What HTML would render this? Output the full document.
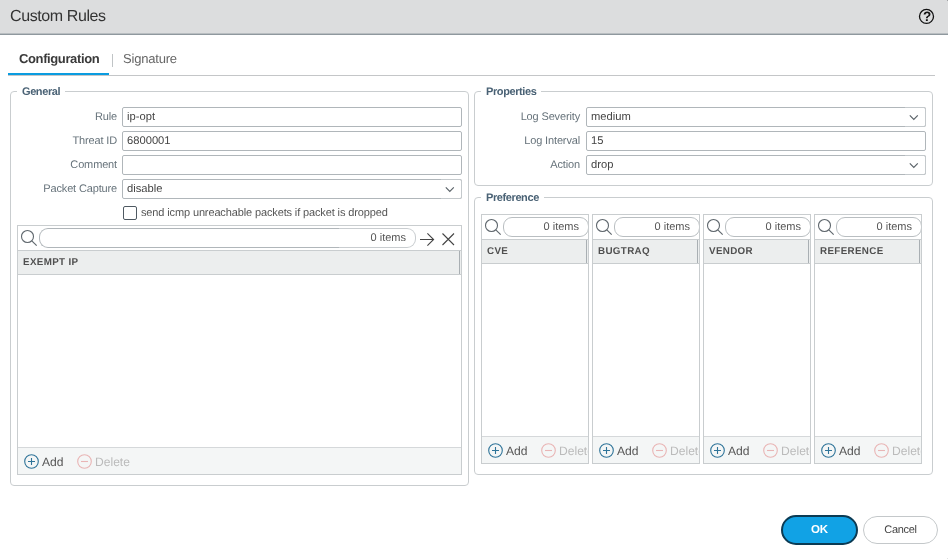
<!DOCTYPE html>
<html><head><meta charset="utf-8"><title>Custom Rules</title>
<style>
*{box-sizing:border-box;margin:0;padding:0}
html,body{width:948px;height:559px;overflow:hidden;background:#fff}
body{font-family:"Liberation Sans",sans-serif;font-size:11px;color:#555;position:relative;text-rendering:geometricPrecision}
#wrap{position:absolute;left:0;top:0;width:948px;height:559px;overflow:hidden;opacity:.999;will-change:opacity}
.abs{position:absolute}
#hdr{left:0;top:0;width:948px;height:35px;background:rgba(220,221,222,.99);border-bottom:1px solid #8f989e}
#hdr2{left:0;top:33px;width:948px;height:1px;background:#b9bec1}
#title{left:10px;top:7px;font-size:16px;color:#333;line-height:20px;white-space:nowrap;letter-spacing:-.4px}
.tab{top:51px;line-height:16px;font-size:13px;white-space:nowrap}
#tabline{left:8px;top:75px;width:927px;height:1px;background:#c4c6c8}
#tabact{left:8px;top:73px;width:101px;height:2px;background:#0a9ce0}
.fs{border:1px solid #c9cdcf;border-radius:4px}
.lg{background:rgba(255,255,255,.99);color:#4a6275;font-weight:bold;font-size:11px;line-height:14px;padding:0 5px;white-space:nowrap;letter-spacing:-.4px}
.lbl{text-align:right;line-height:20px;color:#67737b;white-space:nowrap;letter-spacing:-.15px}
.inp{height:20px;border:1px solid #b0b6ba;border-radius:2px;line-height:18px;padding-left:4px;color:#444;white-space:nowrap;font-size:11.2px}
.trg{width:21px;height:20px;border:1px solid #c4c9cc;border-left:none;border-radius:0 2px 2px 0}
.grid{border:1px solid #c9cdcf}
.gh{background:rgba(236,238,238,.99);border-top:1px solid #c9cdcf;border-bottom:1px solid #c9cdcf;font-weight:bold;font-size:9.8px;letter-spacing:.35px;color:#505050;white-space:nowrap}
.gt{background:rgba(244,246,246,.99);border-top:1px solid #d5d8da}
.pill{border:1px solid #b9bec1;border-radius:9px;height:20px;text-align:right;padding-right:9px;line-height:18px;color:#555;white-space:nowrap}
.btxt{font-size:12.1px;line-height:16px;white-space:nowrap}
svg{position:absolute;overflow:visible}
</style></head><body><div id="wrap">
<div id="hdr" class="abs"></div>
<div id="hdr2" class="abs"></div>
<div class="abs" style="left:947px;top:0;width:1px;height:1px;background:#a2a4a6"></div><div class="abs" style="left:947px;top:558px;width:1px;height:1px;background:#e2e2e2"></div>
<div id="title" class="abs">Custom Rules</div>
<svg style="left:918px;top:8px" width="16" height="16" viewBox="0 0 16 16"><circle cx="8.5" cy="8.4" r="7" fill="none" stroke="#111" stroke-width="1.3"/><text x="9" y="13.2" text-anchor="middle" font-family="Liberation Sans,sans-serif" font-weight="bold" font-size="13.5" fill="#111">?</text></svg>

<div class="abs tab" style="left:19px;font-weight:bold;color:#3a3a3a;letter-spacing:-.38px">Configuration</div>
<div class="abs" style="left:112px;top:54px;width:1px;height:13px;background:#c0c4c6"></div>
<div class="abs tab" style="left:123px;color:#666;letter-spacing:-.2px">Signature</div>
<div id="tabline" class="abs"></div>
<div id="tabact" class="abs"></div>

<!-- General -->
<div class="abs fs" style="left:10px;top:91px;width:459px;height:395px"></div>
<div class="abs lg" style="left:17px;top:85px">General</div>
<div class="abs lbl" style="left:20px;width:97px;top:107px">Rule</div>
<div class="abs inp" style="left:122px;top:107px;width:340px">ip-opt</div>
<div class="abs lbl" style="left:20px;width:97px;top:131px">Threat ID</div>
<div class="abs inp" style="left:122px;top:131px;width:340px">6800001</div>
<div class="abs lbl" style="left:20px;width:97px;top:155px">Comment</div>
<div class="abs inp" style="left:122px;top:155px;width:340px"></div>
<div class="abs lbl" style="left:20px;width:97px;top:179px">Packet Capture</div>
<div class="abs inp" style="left:122px;top:179px;width:340px">disable</div>
<div class="abs trg" style="left:441px;top:179px"></div><svg style="left:445px;top:186px" width="10" height="7" viewBox="0 0 10 7"><path d="M0.8 1.3 L4.8 5.5 L8.8 1.3" fill="none" stroke="#5a6268" stroke-width="1.15"/></svg>
<div class="abs" style="left:123px;top:206px;width:14px;height:14px;border:1px solid #4f5962;border-radius:2px"></div>
<div class="abs" style="left:141px;top:206px;line-height:14px;white-space:nowrap;letter-spacing:-.13px">send icmp unreachable packets if packet is dropped</div>

<div class="abs grid" style="left:17px;top:225px;width:445px;height:250px"></div>
<svg style="left:21px;top:230px" width="17" height="17" viewBox="0 0 17 17"><circle cx="6.5" cy="6.5" r="6" fill="none" stroke="#5f676d" stroke-width="1.1"/><path d="M10.8 10.8 L15.7 15.7" stroke="#5f676d" stroke-width="1.1" fill="none"/></svg>
<div class="abs pill" style="left:39px;top:228px;width:300px;border-color:#b0b6ba;border-right:none;border-radius:9px 0 0 9px"></div><div class="abs pill" style="left:339px;top:228px;width:77px;border-color:#c9cdd0;border-left:none;border-radius:0 9px 9px 0">0 items</div>
<svg style="left:419px;top:233px" width="16" height="14" viewBox="0 0 16 14"><path d="M1 6.5 H14.6 M8.4 0.3 L14.6 6.5 L8.4 12.7" fill="none" stroke="#444" stroke-width="1.1"/></svg>
<svg style="left:442px;top:233px" width="13" height="13" viewBox="0 0 13 13"><path d="M0.5 0.5 L12 12 M12 0.5 L0.5 12" fill="none" stroke="#444" stroke-width="1.1"/></svg>
<div class="abs gh" style="left:18px;top:250px;width:443px;height:25px;line-height:23px;padding-left:5px">EXEMPT IP</div>
<div class="abs" style="left:459px;top:251px;width:1px;height:23px;background:#a9afb3"></div>
<div class="abs gt" style="left:18px;top:447px;width:443px;height:27px"></div>
<svg style="left:24px;top:454px" width="15" height="15" viewBox="0 0 15 15"><circle cx="7.5" cy="7.5" r="6.8" fill="none" stroke="#2f7499" stroke-width="1.1"/><path d="M4 7.5 H11 M7.5 4 V11" stroke="#2f7499" stroke-width="1.1"/></svg>
<div class="abs btxt" style="left:42px;top:454px;color:#555">Add</div>
<svg style="left:77px;top:454px" width="15" height="15" viewBox="0 0 15 15"><circle cx="7.5" cy="7.5" r="6.8" fill="none" stroke="#e9b5b5" stroke-width="1.1"/><path d="M4 7.5 H11" stroke="#e9b5b5" stroke-width="1.1"/></svg>
<div class="abs btxt" style="left:95px;top:454px;color:#bbb">Delete</div>

<!-- Properties -->
<div class="abs fs" style="left:474px;top:91px;width:459px;height:95px"></div>
<div class="abs lg" style="left:481px;top:85px">Properties</div>
<div class="abs lbl" style="left:483px;width:97px;top:107px">Log Severity</div>
<div class="abs inp" style="left:586px;top:107px;width:340px">medium</div>
<div class="abs trg" style="left:905px;top:107px"></div><svg style="left:909px;top:114px" width="10" height="7" viewBox="0 0 10 7"><path d="M0.8 1.3 L4.8 5.5 L8.8 1.3" fill="none" stroke="#5a6268" stroke-width="1.15"/></svg>
<div class="abs lbl" style="left:483px;width:97px;top:131px">Log Interval</div>
<div class="abs inp" style="left:586px;top:131px;width:340px">15</div>
<div class="abs lbl" style="left:483px;width:97px;top:155px">Action</div>
<div class="abs inp" style="left:586px;top:155px;width:340px">drop</div>
<div class="abs trg" style="left:905px;top:155px"></div><svg style="left:909px;top:162px" width="10" height="7" viewBox="0 0 10 7"><path d="M0.8 1.3 L4.8 5.5 L8.8 1.3" fill="none" stroke="#5a6268" stroke-width="1.15"/></svg>

<!-- Preference -->
<div class="abs fs" style="left:474px;top:197px;width:459px;height:278px"></div>
<div class="abs lg" style="left:481px;top:191px">Preference</div>
<div class="abs grid" style="left:481px;top:214px;width:108px;height:250px;overflow:hidden">
<svg style="left:3px;top:4px" width="17" height="17" viewBox="0 0 17 17"><circle cx="6.5" cy="6.5" r="6" fill="none" stroke="#5f676d" stroke-width="1.1"/><path d="M10.8 10.8 L15.7 15.7" stroke="#5f676d" stroke-width="1.1" fill="none"/></svg>
<div class="abs pill" style="left:21px;top:2px;width:86px">0 items</div>
<div class="abs gh" style="left:0;top:24px;width:106px;height:25px;line-height:23px;padding-left:5px">CVE</div>
<div class="abs" style="left:104px;top:25px;width:1px;height:23px;background:#a9afb3"></div>
<div class="abs gt" style="left:0;top:221px;width:106px;height:27px"></div>
<svg style="left:6px;top:228px" width="15" height="15" viewBox="0 0 15 15"><circle cx="7.5" cy="7.5" r="6.8" fill="none" stroke="#2f7499" stroke-width="1.1"/><path d="M4 7.5 H11 M7.5 4 V11" stroke="#2f7499" stroke-width="1.1"/></svg>
<div class="abs btxt" style="left:24px;top:228px;color:#555">Add</div>
<svg style="left:59px;top:228px" width="15" height="15" viewBox="0 0 15 15"><circle cx="7.5" cy="7.5" r="6.8" fill="none" stroke="#e9b5b5" stroke-width="1.1"/><path d="M4 7.5 H11" stroke="#e9b5b5" stroke-width="1.1"/></svg>
<div class="abs btxt" style="left:77px;top:228px;color:#bbb">Delete</div>
</div>
<div class="abs grid" style="left:592px;top:214px;width:108px;height:250px;overflow:hidden">
<svg style="left:3px;top:4px" width="17" height="17" viewBox="0 0 17 17"><circle cx="6.5" cy="6.5" r="6" fill="none" stroke="#5f676d" stroke-width="1.1"/><path d="M10.8 10.8 L15.7 15.7" stroke="#5f676d" stroke-width="1.1" fill="none"/></svg>
<div class="abs pill" style="left:21px;top:2px;width:86px">0 items</div>
<div class="abs gh" style="left:0;top:24px;width:106px;height:25px;line-height:23px;padding-left:5px">BUGTRAQ</div>
<div class="abs" style="left:104px;top:25px;width:1px;height:23px;background:#a9afb3"></div>
<div class="abs gt" style="left:0;top:221px;width:106px;height:27px"></div>
<svg style="left:6px;top:228px" width="15" height="15" viewBox="0 0 15 15"><circle cx="7.5" cy="7.5" r="6.8" fill="none" stroke="#2f7499" stroke-width="1.1"/><path d="M4 7.5 H11 M7.5 4 V11" stroke="#2f7499" stroke-width="1.1"/></svg>
<div class="abs btxt" style="left:24px;top:228px;color:#555">Add</div>
<svg style="left:59px;top:228px" width="15" height="15" viewBox="0 0 15 15"><circle cx="7.5" cy="7.5" r="6.8" fill="none" stroke="#e9b5b5" stroke-width="1.1"/><path d="M4 7.5 H11" stroke="#e9b5b5" stroke-width="1.1"/></svg>
<div class="abs btxt" style="left:77px;top:228px;color:#bbb">Delete</div>
</div>
<div class="abs grid" style="left:703px;top:214px;width:108px;height:250px;overflow:hidden">
<svg style="left:3px;top:4px" width="17" height="17" viewBox="0 0 17 17"><circle cx="6.5" cy="6.5" r="6" fill="none" stroke="#5f676d" stroke-width="1.1"/><path d="M10.8 10.8 L15.7 15.7" stroke="#5f676d" stroke-width="1.1" fill="none"/></svg>
<div class="abs pill" style="left:21px;top:2px;width:86px">0 items</div>
<div class="abs gh" style="left:0;top:24px;width:106px;height:25px;line-height:23px;padding-left:5px">VENDOR</div>
<div class="abs" style="left:104px;top:25px;width:1px;height:23px;background:#a9afb3"></div>
<div class="abs gt" style="left:0;top:221px;width:106px;height:27px"></div>
<svg style="left:6px;top:228px" width="15" height="15" viewBox="0 0 15 15"><circle cx="7.5" cy="7.5" r="6.8" fill="none" stroke="#2f7499" stroke-width="1.1"/><path d="M4 7.5 H11 M7.5 4 V11" stroke="#2f7499" stroke-width="1.1"/></svg>
<div class="abs btxt" style="left:24px;top:228px;color:#555">Add</div>
<svg style="left:59px;top:228px" width="15" height="15" viewBox="0 0 15 15"><circle cx="7.5" cy="7.5" r="6.8" fill="none" stroke="#e9b5b5" stroke-width="1.1"/><path d="M4 7.5 H11" stroke="#e9b5b5" stroke-width="1.1"/></svg>
<div class="abs btxt" style="left:77px;top:228px;color:#bbb">Delete</div>
</div>
<div class="abs grid" style="left:814px;top:214px;width:108px;height:250px;overflow:hidden">
<svg style="left:3px;top:4px" width="17" height="17" viewBox="0 0 17 17"><circle cx="6.5" cy="6.5" r="6" fill="none" stroke="#5f676d" stroke-width="1.1"/><path d="M10.8 10.8 L15.7 15.7" stroke="#5f676d" stroke-width="1.1" fill="none"/></svg>
<div class="abs pill" style="left:21px;top:2px;width:86px">0 items</div>
<div class="abs gh" style="left:0;top:24px;width:106px;height:25px;line-height:23px;padding-left:5px">REFERENCE</div>
<div class="abs" style="left:104px;top:25px;width:1px;height:23px;background:#a9afb3"></div>
<div class="abs gt" style="left:0;top:221px;width:106px;height:27px"></div>
<svg style="left:6px;top:228px" width="15" height="15" viewBox="0 0 15 15"><circle cx="7.5" cy="7.5" r="6.8" fill="none" stroke="#2f7499" stroke-width="1.1"/><path d="M4 7.5 H11 M7.5 4 V11" stroke="#2f7499" stroke-width="1.1"/></svg>
<div class="abs btxt" style="left:24px;top:228px;color:#555">Add</div>
<svg style="left:59px;top:228px" width="15" height="15" viewBox="0 0 15 15"><circle cx="7.5" cy="7.5" r="6.8" fill="none" stroke="#e9b5b5" stroke-width="1.1"/><path d="M4 7.5 H11" stroke="#e9b5b5" stroke-width="1.1"/></svg>
<div class="abs btxt" style="left:77px;top:228px;color:#bbb">Delete</div>
</div>

<!-- Buttons -->
<div class="abs" style="left:781px;top:515px;width:77px;height:30px;border-radius:15px;background:rgba(14,161,229,.99);border:2px solid #0b3b54;color:#fff;font-weight:bold;font-size:11.5px;text-align:center;line-height:27px">OK</div>
<div class="abs" style="left:863px;top:516px;width:75px;height:28px;border-radius:14px;border:1px solid #c4c8ca;color:#444;font-size:11px;letter-spacing:-.3px;text-align:center;line-height:27px">Cancel</div>
</div></body></html>
